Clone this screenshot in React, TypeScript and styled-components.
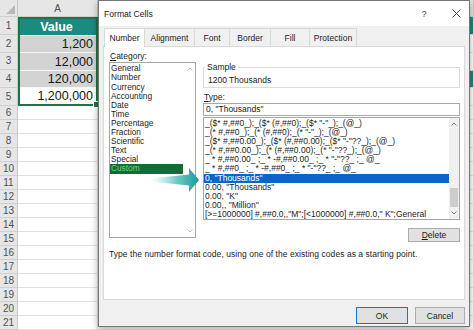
import styled, { createGlobalStyle } from "styled-components";

const GlobalStyle = createGlobalStyle`
  html, body {
    margin: 0;
    padding: 0;
  }
  body {
    width: 474px;
    height: 330px;
    overflow: hidden;
    background: #fff;
    font-family: "Liberation Sans", Arial, sans-serif;
  }
`;

const categories = [
  "General", "Number", "Currency", "Accounting", "Date", "Time",
  "Percentage", "Fraction", "Scientific", "Text", "Special", "Custom",
];

const typeCodes = [
  '_($* #,##0_);_($* (#,##0);_($* "-"_);_(@_)',
  '_(* #,##0_);_(* (#,##0);_(* "-"_);_(@_)',
  '_($* #,##0.00_);_($* (#,##0.00);_($* "-"??_);_(@_)',
  '_(* #,##0.00_);_(* (#,##0.00);_(* "-"??_);_(@_)',
  '_ * #,##0.00_ ;_ * -#,##0.00_ ;_ * "-"??_ ;_ @_ ',
  '_ * #,##0_ ;_ * -#,##0_ ;_ * "-"??_ ;_ @_ ',
  '0, "Thousands"',
  '0.00, "Thousands"',
  '0.00, "K"',
  '0.00,, "Million"',
  '[>=1000000] #,##0.0,,"M";[<1000000] #,##0.0," K";General',
];

const tabs = [
  { label: "Number", w: 41 },
  { label: "Alignment", w: 50 },
  { label: "Font", w: 35 },
  { label: "Border", w: 41 },
  { label: "Fill", w: 39 },
  { label: "Protection", w: 47 },
];

const values = ["1,200", "12,000", "120,000", "1,200,000"];

/* ---------- spreadsheet ---------- */

const Page = styled.div`
  position: relative;
  width: 474px;
  height: 330px;
  overflow: hidden;
`;

const Sheet = styled.div`
  display: flex;
  height: 100%;
`;

const Column = styled.div<{ $w?: number }>`
  display: flex;
  flex-direction: column;
  flex: ${(p) => (p.$w ? `0 0 ${p.$w}px` : "1")};
`;

const Header = styled.div<{ $h: number }>`
  position: relative;
  height: ${(p) => p.$h}px;
  flex: none;
  box-sizing: border-box;
  background: #e6e6e6;
  border-right: 1px solid #c9c9c9;
  border-bottom: 1px solid #cfcfcf;
  color: #505050;
  font-size: 10px;
  display: flex;
  align-items: center;
  justify-content: center;
`;

const Corner = styled(Header)`
  &::after {
    content: "";
    position: absolute;
    right: 2px;
    bottom: 2px;
    border-left: 9px solid transparent;
    border-bottom: 9px solid #b9b9b9;
  }
`;

const Selection = styled.div`
  position: relative;
  height: 89px;
  flex: none;
  box-sizing: border-box;
  border: 2px solid #217346;
  display: flex;
  flex-direction: column;

  &::after {
    content: "";
    position: absolute;
    right: -4px;
    bottom: -4px;
    width: 5px;
    height: 5px;
    background: #217346;
    border: 1px solid #fff;
  }
`;

const DataCell = styled.div<{ $fill: string; $head?: boolean }>`
  flex: 1;
  box-sizing: border-box;
  background: ${(p) => p.$fill};
  border-bottom: 1px solid #f6f6f6;
  display: flex;
  align-items: center;
  justify-content: ${(p) => (p.$head ? "center" : "flex-end")};
  padding-right: 3px;
  font-size: 12.5px;
  font-weight: ${(p) => (p.$head ? 700 : 400)};
  color: ${(p) => (p.$head ? "#fff" : "#151515")};

  &:last-child {
    border-bottom: none;
  }
`;

const GridCell = styled.div<{ $h: number; $fill?: string }>`
  height: ${(p) => p.$h}px;
  flex: none;
  box-sizing: border-box;
  background: ${(p) => p.$fill || "#fff"};
  border-right: 1px solid #e1e1e1;
  border-bottom: 1px solid #e1e1e1;
`;

/* ---------- dialog ---------- */

const Dialog = styled.div`
  position: absolute;
  left: 98px;
  top: 0;
  width: 372px;
  height: 327px;
  box-sizing: border-box;
  border: 1px solid #767676;
  background: #f0f0f0;
  box-shadow: 0 2px 7px rgba(0, 0, 0, 0.35);
  display: flex;
  flex-direction: column;
  font-family: "Liberation Sans", Arial, sans-serif;
  font-size: 8.5px;
  color: #1b1b1b;
`;

const TitleBar = styled.div`
  height: 25px;
  flex: none;
  background: #fff;
  display: flex;
  align-items: center;
  padding-left: 5px;
`;

const Title = styled.div`
  flex: 1;
  font-size: 8.6px;
`;

const TitleButton = styled.div<{ $w: number }>`
  width: ${(p) => p.$w}px;
  height: 100%;
  display: flex;
  align-items: center;
  justify-content: center;
  color: #444;
  font-size: 8.5px;
`;

const TabStrip = styled.div`
  display: flex;
  height: 18px;
  margin-top: 2px;
  padding-left: 5px;
  flex: none;
`;

const Tab = styled.div<{ $w: number; $active?: boolean }>`
  position: relative;
  z-index: ${(p) => (p.$active ? 1 : 0)};
  width: ${(p) => p.$w}px;
  height: ${(p) => (p.$active ? 19 : 18)}px;
  box-sizing: border-box;
  background: ${(p) => (p.$active ? "#fff" : "#f0f0f0")};
  border: 1px solid #d9d9d9;
  border-left: ${(p) => (p.$active ? "1px solid #d9d9d9" : "none")};
  border-bottom: none;
  display: flex;
  align-items: center;
  justify-content: center;
`;

const Panel = styled.div`
  height: 254px;
  flex: none;
  margin: 0 4px;
  box-sizing: border-box;
  background: #fff;
  border: 1px solid #d9d9d9;
  padding: 4px 4px 0 5px;
`;

const PanelRow = styled.div`
  display: flex;
  gap: 7px;
`;

const LeftCol = styled.div`
  width: 87px;
  display: flex;
  flex-direction: column;
`;

const RightCol = styled.div`
  flex: 1;
  display: flex;
  flex-direction: column;
`;

const Label = styled.div<{ $mt?: number }>`
  line-height: 10px;
  height: 10px;
  margin-top: ${(p) => p.$mt || 0}px;
  margin-bottom: 1px;
  padding-left: 1px;
`;

const ListBox = styled.div<{ $h: number; $mt?: number }>`
  height: ${(p) => p.$h}px;
  margin-top: ${(p) => p.$mt || 0}px;
  box-sizing: border-box;
  border: 1px solid #a5a5a5;
  display: flex;
  background: #fff;
`;

const Items = styled.div<{ $pt: number; $pr?: number }>`
  flex: 1;
  min-width: 0;
  padding-top: ${(p) => p.$pt}px;
  padding-right: ${(p) => p.$pr || 0}px;
  overflow: hidden;
`;

const Item = styled.div<{ $sel?: "green" | "blue" }>`
  height: 9.1px;
  line-height: 9.1px;
  white-space: nowrap;
  overflow: hidden;
  padding-left: 1px;
  background: ${(p) =>
    p.$sel === "green" ? "#146b37" : p.$sel === "blue" ? "#0b63cc" : "transparent"};
  color: ${(p) =>
    p.$sel === "green" ? "#74d86f" : p.$sel === "blue" ? "#fff" : "inherit"};
`;

const CategoryItems = styled(Items)`
  font-size: 8.3px;
`;

const ScrollBar = styled.div<{ $bg: string }>`
  width: 10px;
  flex: none;
  background: ${(p) => p.$bg};
  display: flex;
  flex-direction: column;
`;

const ScrollButton = styled.div`
  height: 12px;
  flex: none;
  display: flex;
  align-items: center;
  justify-content: center;
`;

const Track = styled.div`
  flex: 1;
  display: flex;
  flex-direction: column;
  justify-content: flex-end;
`;

const Thumb = styled.div<{ $h: number }>`
  height: ${(p) => p.$h}px;
  margin: 0 1px;
  background: #cdcdcd;
`;

const SampleGroup = styled.fieldset`
  margin: 11px 0 0;
  padding: 0 1px;
  min-width: 0;
  border: 1px solid #dcdcdc;

  legend {
    padding: 0 2px;
    line-height: 10px;
    font-size: 8.5px;
  }
`;

const SampleText = styled.div`
  line-height: 10px;
  padding: 3px 0 2px 3px;
`;

const TextBox = styled.div`
  height: 13px;
  box-sizing: border-box;
  border: 1px solid #a9a9a9;
  padding-left: 2px;
  line-height: 11px;
`;

const Button = styled.div<{ $w: number; $default?: boolean }>`
  width: ${(p) => p.$w}px;
  height: 14px;
  flex: none;
  box-sizing: border-box;
  background: #e1e1e1;
  border: 1px solid ${(p) => (p.$default ? "#0a78d4" : "#adadad")};
  display: flex;
  align-items: center;
  justify-content: center;
`;

const DeleteButton = styled(Button)`
  align-self: flex-end;
  margin-top: 8px;
`;

const FooterButton = styled(Button)`
  height: 17px;
`;

const Hint = styled.div`
  margin-top: 7px;
  line-height: 10px;
  letter-spacing: 0.05px;
`;

const Footer = styled.div`
  flex: 1;
  display: flex;
  justify-content: flex-end;
  gap: 7px;
  padding: 7px 4px 0 0;
`;

const Arrow = styled.svg`
  position: absolute;
  left: 148px;
  top: 166px;
`;

const Chevron = ({ up, color }: { up?: boolean; color: string }) => (
  <svg width="6" height="4" viewBox="0 0 6 4">
    <polyline
      points={up ? "0.5,3.5 3,1 5.5,3.5" : "0.5,0.5 3,3 5.5,0.5"}
      fill="none"
      stroke={color}
      strokeWidth="1"
    />
  </svg>
);

export default function App() {
  const lowerRows = Array.from({ length: 16 }, (_, i) => i + 6);

  return (
    <Page>
      <GlobalStyle />
      <Sheet>
        <Column $w={18}>
          <Corner $h={17} />
          {[1, 2, 3, 4, 5].map((n) => (
            <Header key={n} $h={17.8}>{n}</Header>
          ))}
          {lowerRows.map((n) => (
            <Header key={n} $h={14}>{n}</Header>
          ))}
        </Column>

        <Column $w={80}>
          <Header $h={17}>A</Header>
          <Selection>
            <DataCell $fill="#1b8a80" $head>Value</DataCell>
            {values.map((v, i) => (
              <DataCell key={v} $fill={i < 3 ? "#d3d3d3" : "#fff"}>{v}</DataCell>
            ))}
          </Selection>
          {lowerRows.map((n) => (
            <GridCell key={n} $h={14} />
          ))}
        </Column>

        <Column>
          <Header $h={17} />
          <GridCell $h={18} $fill="#1b8a80" />
          <GridCell $h={17.8} />
          <GridCell $h={17.8} />
          <GridCell $h={17.8} $fill="#2b7f8c" />
          <GridCell $h={17.4} />
          {lowerRows.map((n) => (
            <GridCell key={n} $h={14} />
          ))}
        </Column>
      </Sheet>

      <Dialog>
        <TitleBar>
          <Title>Format Cells</Title>
          <TitleButton $w={22}>?</TitleButton>
          <TitleButton $w={8} />
          <TitleButton $w={26}>
            <svg width="9" height="9" viewBox="0 0 9 9">
              <path d="M0.5 0.5 L8.5 8.5 M8.5 0.5 L0.5 8.5" stroke="#333" strokeWidth="0.9" />
            </svg>
          </TitleButton>
        </TitleBar>

        <TabStrip>
          {tabs.map((t, i) => (
            <Tab key={t.label} $w={t.w} $active={i === 0}>{t.label}</Tab>
          ))}
        </TabStrip>

        <Panel>
          <PanelRow>
            <LeftCol>
              <Label><u>C</u>ategory:</Label>
              <ListBox $h={176}>
                <CategoryItems $pt={1.4} $pr={2}>
                  {categories.map((c) => (
                    <Item key={c} $sel={c === "Custom" ? "green" : undefined}>
                      {c}
                    </Item>
                  ))}
                </CategoryItems>
                <ScrollBar $bg="#fff">
                  <ScrollButton><Chevron up color="#c2c2c2" /></ScrollButton>
                  <Track />
                  <ScrollButton><Chevron color="#c2c2c2" /></ScrollButton>
                </ScrollBar>
              </ListBox>
            </LeftCol>

            <RightCol>
              <SampleGroup>
                <legend>Sample</legend>
                <SampleText>1200 Thousands</SampleText>
              </SampleGroup>
              <Label $mt={4}><u>T</u>ype:</Label>
              <TextBox>0, "Thousands"</TextBox>
              <ListBox $h={103} $mt={1}>
                <Items $pt={1}>
                  {typeCodes.map((c, i) => (
                    <Item key={c} $sel={i === 6 ? "blue" : undefined}>{c}</Item>
                  ))}
                </Items>
                <ScrollBar $bg="#f0f0f0">
                  <ScrollButton><Chevron up color="#7a7a7a" /></ScrollButton>
                  <Track>
                    <Thumb $h={19} />
                  </Track>
                  <ScrollButton><Chevron color="#7a7a7a" /></ScrollButton>
                </ScrollBar>
              </ListBox>
              <DeleteButton $w={52}><u>D</u>elete</DeleteButton>
            </RightCol>
          </PanelRow>
          <Hint>Type the number format code, using one of the existing codes as a starting point.</Hint>
        </Panel>

        <Footer>
          <FooterButton $w={52} $default>OK</FooterButton>
          <FooterButton $w={50}>Cancel</FooterButton>
        </Footer>
      </Dialog>

      <Arrow width="54" height="28" viewBox="0 0 54 28">
        <defs>
          <linearGradient id="arrowFill" x1="0" y1="0" x2="1" y2="0">
            <stop offset="0" stopColor="#ffffff" stopOpacity="0.6" />
            <stop offset="0.55" stopColor="#6fc9c6" />
            <stop offset="1" stopColor="#159d9a" />
          </linearGradient>
        </defs>
        <polygon
          points="2,12.5 41,8.5 41,2 51,14 41,26 41,19.5 2,15.5"
          fill="url(#arrowFill)"
        />
      </Arrow>
    </Page>
  );
}
